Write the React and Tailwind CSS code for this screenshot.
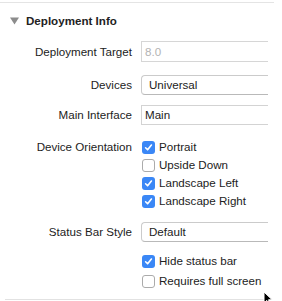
import React from "react";

const FONT = { fontFamily: '"Liberation Sans", Arial, sans-serif' };

function Check({ checked, label }) {
  return (
    <div className="flex items-center h-[18px]">
      {checked ? (
        <span className="w-[13px] h-[13px] rounded-[3px] bg-[#3a87f6] flex items-center justify-center">
          <svg width="9" height="9" viewBox="0 0 9 9">
            <path d="M1.6 4.8 L3.6 6.8 L7.4 2" fill="none" stroke="white" strokeWidth="1.6" strokeLinecap="round" strokeLinejoin="round" />
          </svg>
        </span>
      ) : (
        <span className="w-[13px] h-[13px] rounded-[3px] border border-[#ababab] bg-white" />
      )}
      <span className="ml-[4px] text-[11.6px] text-[#222]">{label}</span>
    </div>
  );
}

function Row({ label, children, className = "" }) {
  return (
    <div className={`flex items-center ${className}`}>
      <div className="w-[132px] text-right text-[11.6px] text-[#222] shrink-0">{label}</div>
      <div className="ml-[9px] w-[127px]">{children}</div>
    </div>
  );
}

export default function App() {
  return (
    <div className="w-[282px] h-[301px] bg-white relative overflow-hidden" style={FONT}>
      <div className="mt-[2px] w-[274px] h-px bg-[#e4e4e4]" />

      <div className="mt-[10px] h-[16px] flex items-center">
        <svg className="ml-[10px]" width="9" height="8" viewBox="0 0 9 8">
          <path d="M0 0.5 H9 L4.5 7.5 Z" fill="#8c8c8c" />
        </svg>
        <span className="ml-[7px] text-[11.6px] font-bold text-[#222]">Deployment Info</span>
      </div>

      <Row label="Deployment Target" className="mt-[12px]">
        <div className="h-[21px] border border-r-0 border-[#d6d6d6] flex items-center pl-[3px] text-[11.6px] text-[#b3b3b3]">8.0</div>
      </Row>

      <Row label="Devices" className="mt-[13px]">
        <div className="h-[20px] border border-r-0 border-[#cbcbcb] border-b-[#b9b9b9] rounded-l-[4px] flex items-center pl-[7px] text-[11.6px] text-[#222]">Universal</div>
      </Row>

      <Row label="Main Interface" className="mt-[10px]">
        <div className="h-[20px] border border-r-0 border-[#d3d3d3] flex items-center pl-[3px] text-[11.6px] text-[#222]">Main</div>
      </Row>

      <div className="mt-[13px] flex items-start">
        <div className="w-[132px] h-[18px] flex items-center justify-end text-[11.6px] text-[#222] shrink-0">Device Orientation</div>
        <div className="ml-[10px] flex flex-col">
          <Check checked label="Portrait" />
          <Check label="Upside Down" />
          <Check checked label="Landscape Left" />
          <Check checked label="Landscape Right" />
        </div>
      </div>

      <Row label="Status Bar Style" className="mt-[12px]">
        <div className="h-[20px] border border-r-0 border-[#cbcbcb] border-b-[#b9b9b9] rounded-l-[4px] flex items-center pl-[7px] text-[11.6px] text-[#222]">Default</div>
      </Row>

      <div className="mt-[10px] ml-[142px] flex flex-col gap-[2px]">
        <Check checked label="Hide status bar" />
        <Check label="Requires full screen" />
      </div>

      <div className="mt-[9px] ml-[5px] w-[263px] h-px bg-[#e2e2e2]" />

      <svg className="absolute left-[263px] top-[291px]" width="12" height="14" viewBox="0 0 12 14">
        <path d="M1 1 L1 12 L3.8 9.4 L5.8 13.4 L7.4 12.6 L5.5 8.8 L9.2 8.8 Z" fill="black" stroke="white" strokeWidth="1" strokeLinejoin="round" />
      </svg>
    </div>
  );
}
